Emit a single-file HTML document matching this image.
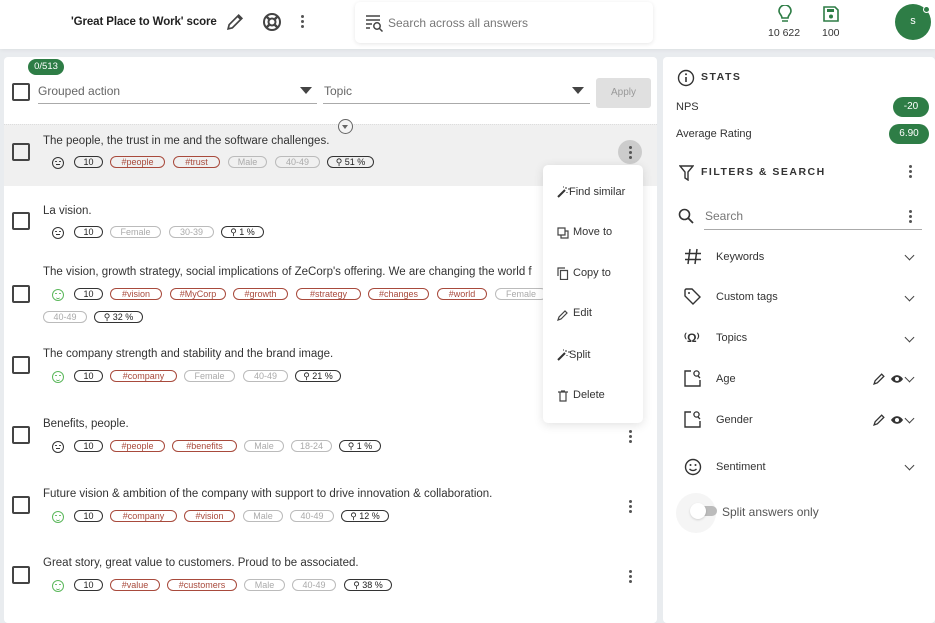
<!DOCTYPE html>
<html><head><meta charset="utf-8">
<style>
*{box-sizing:border-box;margin:0;padding:0}
body{width:935px;height:623px;overflow:hidden;background:#e9ecef;font-family:"Liberation Sans",sans-serif;color:#333;position:relative}
.abs{position:absolute}
.top{left:0;top:0;width:935px;height:49px;background:#fff;box-shadow:0 1px 4px rgba(0,0,0,.06)}
.panel{background:#fff;border-radius:4px}
.cb{position:absolute;left:12px;width:18px;height:18px;border:2px solid #444;border-radius:2px}
.txt{position:absolute;left:43px;font-size:11.5px;color:#333;white-space:nowrap}
.chip{position:absolute;height:12px;border:1.4px solid #333;border-radius:7px;font-size:9px;line-height:10px;text-align:center;color:#222;white-space:nowrap}
.r{border-color:#a84a3c;color:#a84a3c}
.g{border-color:#bbb;color:#aaa}
.smile{position:absolute;left:52px;width:12px;height:12px;border:1.5px solid #333;border-radius:50%}
.smile.gr{border-color:#5cb85c}
.smile::before{content:"";position:absolute;left:2px;top:2.5px;width:1.8px;height:1.8px;background:currentColor;border-radius:50%;box-shadow:4px 0 0 currentColor}
.smile::after{content:"";position:absolute;left:2.5px;top:5.5px;width:4px;height:1.2px;background:currentColor}
.smile.gr{color:#5cb85c}.smile{color:#333}
.smile.gr::after{height:2px;background:none;border-bottom:1.2px solid #5cb85c;border-radius:0 0 3px 3px}
.keb{position:absolute;width:3px;height:3px;background:#555;border-radius:50%;box-shadow:0 5px 0 #555,0 -5px 0 #555}
.mi{position:absolute;left:573px;font-size:11px;color:#333}
.side{position:absolute;font-size:11px;color:#333}
.chev{position:absolute;width:7px;height:7px;border-right:1.6px solid #444;border-bottom:1.6px solid #444;transform:rotate(45deg)}
.pill{position:absolute;background:#2e7d46;color:#fff;border-radius:10px;font-size:10px;text-align:center;line-height:20px}
</style></head><body>
<div class="abs top"></div>
<div class="abs" style="left:71px;top:16px;font-size:11.5px;font-weight:bold;color:#222;letter-spacing:-0.1px">'Great Place to Work' score</div>
<svg class="abs" style="left:226px;top:12px" width="19" height="19" viewBox="0 0 18 18"><path d="M2 16l1-4 9-9 3 3-9 9z M11 4l3 3" fill="none" stroke="#444" stroke-width="1.6"/></svg>
<svg class="abs" style="left:262px;top:12px" width="20" height="20" viewBox="0 0 20 20"><circle cx="10" cy="10" r="8" fill="none" stroke="#444" stroke-width="2"/><circle cx="10" cy="10" r="3.5" fill="none" stroke="#444" stroke-width="2"/><path d="M4 4l3.5 3.5M16 4l-3.5 3.5M4 16l3.5-3.5M16 16l-3.5-3.5" stroke="#444" stroke-width="2.5"/></svg>
<div class="keb" style="left:301px;top:20px"></div>
<div class="abs" style="left:355px;top:2px;width:298px;height:41px;background:#fff;border-radius:5px;box-shadow:0 1px 4px rgba(0,0,0,.1)"></div>
<svg class="abs" style="left:365px;top:14px" width="20" height="18" viewBox="0 0 20 18"><path d="M1 2h14M1 6h14M1 10h6M1 14h4" stroke="#444" stroke-width="1.5"/><circle cx="12" cy="12" r="3.2" fill="none" stroke="#444" stroke-width="1.5"/><path d="M14.5 14.5l3 3" stroke="#444" stroke-width="1.5"/></svg>
<div class="abs" style="left:388px;top:16px;font-size:12px;color:#777">Search across all answers</div>
<svg class="abs" style="left:777px;top:5px" width="16" height="20" viewBox="0 0 16 20"><path d="M5 13c0-3-3-4-3-7a6 6 0 0 1 12 0c0 3-3 4-3 7z M5 16h6" fill="none" stroke="#2e7d46" stroke-width="1.6"/></svg>
<div class="abs" style="left:768px;top:27px;font-size:10.5px">10 622</div>
<svg class="abs" style="left:823px;top:6px" width="16" height="16" viewBox="0 0 16 16"><path d="M1 1h11l3 3v11H1z" fill="none" stroke="#2e7d46" stroke-width="1.6"/><rect x="4" y="3" width="7" height="3" fill="#2e7d46"/><circle cx="8" cy="10.5" r="2" fill="#2e7d46"/></svg>
<div class="abs" style="left:822px;top:27px;font-size:10.5px">100</div>
<div class="abs" style="left:895px;top:4px;width:36px;height:36px;border-radius:50%;background:#2e7d46;color:#fff;font-size:11px;text-align:center;line-height:34px">s</div>
<div class="abs" style="left:923px;top:6px;width:7px;height:7px;border-radius:50%;background:#2e7d46;border:1.5px solid #fff"></div>

<div class="abs panel" style="left:4px;top:57px;width:653px;height:566px"></div>
<div class="abs panel" style="left:663px;top:57px;width:272px;height:566px"></div>

<div class="pill" style="left:28px;top:59px;width:36px;height:16px;line-height:16px;font-size:9.5px">0/513</div>
<div class="cb" style="top:83px"></div>
<div class="abs" style="left:38px;top:84px;font-size:12px;color:#666">Grouped action</div>
<div class="abs" style="left:38px;top:103px;width:279px;border-top:1px solid #aaa"></div>
<div class="abs" style="left:300px;top:87px;border:6px solid transparent;border-top:7px solid #444;border-bottom:0"></div>
<div class="abs" style="left:324px;top:84px;font-size:12px;color:#666">Topic</div>
<div class="abs" style="left:323px;top:103px;width:267px;border-top:1px solid #aaa"></div>
<div class="abs" style="left:572px;top:87px;border:6px solid transparent;border-top:7px solid #444;border-bottom:0"></div>
<div class="abs" style="left:596px;top:78px;width:55px;height:30px;background:#e0e0e0;border-radius:3px;color:#999;font-size:10px;text-align:center;line-height:30px">Apply</div>

<div class="abs" style="left:4px;top:124px;width:653px;height:62px;background:#f0f0f0;border-top:1px dotted #ddd"></div>
<div class="abs" style="left:338px;top:119px;width:15px;height:15px;border:1.4px solid #666;border-radius:50%;background:#f4f4f4"></div>
<div class="abs" style="left:342px;top:125px;border:3.5px solid transparent;border-top:4px solid #666;border-bottom:0"></div>
<div class="abs" style="left:618px;top:140px;width:24px;height:24px;border-radius:50%;background:#ccc"></div>
<div class="keb" style="left:629px;top:151px"></div>

<!-- row1 -->
<div class="cb" style="top:143px"></div>
<div class="txt" style="top:135px">The people, the trust in me and the software challenges.</div>
<div class="smile" style="top:157px"></div>
<div class="chip" style="left:74px;top:156px;width:29px">10</div>
<div class="chip r" style="left:110px;top:156px;width:55px">#people</div>
<div class="chip r" style="left:173px;top:156px;width:47px">#trust</div>
<div class="chip g" style="left:228px;top:156px;width:39px">Male</div>
<div class="chip g" style="left:275px;top:156px;width:45px">40-49</div>
<div class="chip" style="left:327px;top:156px;width:47px">⚲ 51 %</div>
<!-- row2 -->
<div class="cb" style="top:212px"></div>
<div class="txt" style="top:205px">La vision.</div>
<div class="smile" style="top:227px"></div>
<div class="chip" style="left:74px;top:226px;width:29px">10</div>
<div class="chip g" style="left:110px;top:226px;width:51px">Female</div>
<div class="chip g" style="left:169px;top:226px;width:45px">30-39</div>
<div class="chip" style="left:221px;top:226px;width:43px">⚲ 1 %</div>
<!-- row3 -->
<div class="cb" style="top:285px"></div>
<div class="txt" style="top:266px;width:500px;overflow:hidden">The vision, growth strategy, social implications of ZeCorp's offering. We are changing the world f</div>
<div class="smile gr" style="top:289px"></div>
<div class="chip" style="left:74px;top:288px;width:29px">10</div>
<div class="chip r" style="left:110px;top:288px;width:52px">#vision</div>
<div class="chip r" style="left:170px;top:288px;width:56px">#MyCorp</div>
<div class="chip r" style="left:233px;top:288px;width:55px">#growth</div>
<div class="chip r" style="left:296px;top:288px;width:65px">#strategy</div>
<div class="chip r" style="left:368px;top:288px;width:61px">#changes</div>
<div class="chip r" style="left:437px;top:288px;width:50px">#world</div>
<div class="chip g" style="left:495px;top:288px;width:52px">Female</div>
<div class="chip g" style="left:43px;top:311px;width:44px">40-49</div>
<div class="chip" style="left:94px;top:311px;width:49px">⚲ 32 %</div>
<!-- row4 -->
<div class="cb" style="top:356px"></div>
<div class="txt" style="top:348px">The company strength and stability and the brand image.</div>
<div class="smile gr" style="top:371px"></div>
<div class="chip" style="left:74px;top:370px;width:29px">10</div>
<div class="chip r" style="left:110px;top:370px;width:67px">#company</div>
<div class="chip g" style="left:184px;top:370px;width:51px">Female</div>
<div class="chip g" style="left:243px;top:370px;width:45px">40-49</div>
<div class="chip" style="left:295px;top:370px;width:46px">⚲ 21 %</div>
<!-- row5 -->
<div class="cb" style="top:426px"></div>
<div class="txt" style="top:418px">Benefits, people.</div>
<div class="smile" style="top:441px"></div>
<div class="chip" style="left:74px;top:440px;width:29px">10</div>
<div class="chip r" style="left:110px;top:440px;width:55px">#people</div>
<div class="chip r" style="left:172px;top:440px;width:65px">#benefits</div>
<div class="chip g" style="left:244px;top:440px;width:40px">Male</div>
<div class="chip g" style="left:291px;top:440px;width:41px">18-24</div>
<div class="chip" style="left:339px;top:440px;width:42px">⚲ 1 %</div>
<div class="keb" style="left:629px;top:435px"></div>
<!-- row6 -->
<div class="cb" style="top:496px"></div>
<div class="txt" style="top:488px">Future vision &amp; ambition of the company with support to drive innovation &amp; collaboration.</div>
<div class="smile gr" style="top:511px"></div>
<div class="chip" style="left:74px;top:510px;width:29px">10</div>
<div class="chip r" style="left:110px;top:510px;width:67px">#company</div>
<div class="chip r" style="left:184px;top:510px;width:51px">#vision</div>
<div class="chip g" style="left:243px;top:510px;width:40px">Male</div>
<div class="chip g" style="left:290px;top:510px;width:44px">40-49</div>
<div class="chip" style="left:341px;top:510px;width:48px">⚲ 12 %</div>
<div class="keb" style="left:629px;top:505px"></div>
<!-- row7 -->
<div class="cb" style="top:566px"></div>
<div class="txt" style="top:557px">Great story, great value to customers. Proud to be associated.</div>
<div class="smile gr" style="top:580px"></div>
<div class="chip" style="left:74px;top:579px;width:29px">10</div>
<div class="chip r" style="left:110px;top:579px;width:50px">#value</div>
<div class="chip r" style="left:167px;top:579px;width:70px">#customers</div>
<div class="chip g" style="left:244px;top:579px;width:41px">Male</div>
<div class="chip g" style="left:292px;top:579px;width:44px">40-49</div>
<div class="chip" style="left:344px;top:579px;width:48px">⚲ 38 %</div>
<div class="keb" style="left:629px;top:575px"></div>

<!-- menu -->
<div class="abs" style="left:543px;top:165px;width:100px;height:258px;background:#fff;border-radius:5px;box-shadow:0 2px 10px rgba(0,0,0,.12)"></div>
<svg class="abs" style="left:557px;top:186px" width="13" height="12" viewBox="0 0 13 12"><path d="M1 11l7-7" stroke="#333" stroke-width="2"/><path d="M9 1v2M11 3h2M10 6v1M6 1h1" stroke="#333" stroke-width="1"/></svg>
<div class="mi" style="top:186px;left:569px">Find similar</div>
<div class="mi" style="top:226px">Move to</div>
<svg class="abs" style="left:557px;top:227px" width="12" height="12" viewBox="0 0 12 12"><path d="M1 1h7v7H1z M4 8v3h7V4H8" fill="none" stroke="#444" stroke-width="1.2"/></svg>
<div class="mi" style="top:267px">Copy to</div>
<svg class="abs" style="left:557px;top:267px" width="12" height="13" viewBox="0 0 12 13"><path d="M1 9V1h7 M3.5 3.5h7v9h-7z" fill="none" stroke="#444" stroke-width="1.2"/></svg>
<div class="mi" style="top:307px">Edit</div>
<svg class="abs" style="left:557px;top:309px" width="12" height="12" viewBox="0 0 12 12"><path d="M1 11l1-3 6-6 2 2-6 6z" fill="none" stroke="#444" stroke-width="1.2"/></svg>
<svg class="abs" style="left:557px;top:349px" width="13" height="12" viewBox="0 0 13 12"><path d="M1 11l7-7" stroke="#333" stroke-width="2"/><path d="M9 1v2M11 3h2M10 6v1M6 1h1" stroke="#333" stroke-width="1"/></svg>
<div class="mi" style="top:349px;left:569px">Split</div>
<div class="mi" style="top:389px">Delete</div>
<svg class="abs" style="left:558px;top:390px" width="10" height="12" viewBox="0 0 10 12"><path d="M0 2h10 M3 1h4 M2 2v9h6V2" fill="none" stroke="#444" stroke-width="1.2"/></svg>

<!-- right side -->
<svg class="abs" style="left:677px;top:69px" width="18" height="18" viewBox="0 0 18 18"><circle cx="9" cy="9" r="7.5" fill="none" stroke="#333" stroke-width="1.4"/><path d="M9 8v5" stroke="#333" stroke-width="1.6"/><circle cx="9" cy="5.3" r="1" fill="#333"/></svg>
<div class="side" style="left:701px;top:71px;font-weight:bold;letter-spacing:1.5px;font-size:10.5px">STATS</div>
<div class="side" style="left:676px;top:101px">NPS</div>
<div class="pill" style="left:893px;top:97px;width:36px">-20</div>
<div class="side" style="left:676px;top:128px">Average Rating</div>
<div class="pill" style="left:889px;top:124px;width:40px">6.90</div>
<svg class="abs" style="left:679px;top:165px" width="15" height="16" viewBox="0 0 15 16"><path d="M1 1h13l-5 6v8l-3-2V7z" fill="none" stroke="#333" stroke-width="1.4"/></svg>
<div class="side" style="left:701px;top:166px;font-weight:bold;letter-spacing:1.5px;font-size:10.5px">FILTERS &amp; SEARCH</div>
<div class="keb" style="left:909px;top:170px"></div>
<svg class="abs" style="left:678px;top:208px" width="16" height="16" viewBox="0 0 16 16"><circle cx="6.5" cy="6.5" r="5" fill="none" stroke="#333" stroke-width="1.6"/><path d="M10 10l5 5" stroke="#333" stroke-width="1.8"/></svg>
<div class="side" style="left:705px;top:209px;font-size:12px;color:#777">Search</div>
<div class="abs" style="left:704px;top:229px;width:218px;border-top:1px solid #aaa"></div>
<div class="keb" style="left:909px;top:215px"></div>

<svg class="abs" style="left:684px;top:248px" width="18" height="17" viewBox="0 0 18 17"><path d="M6 1L4 16M13 1l-2 15M1 5.5h16M1 11.5h16" stroke="#333" stroke-width="1.5"/></svg>
<div class="side" style="left:716px;top:251px">Keywords</div><div class="chev" style="left:906px;top:252px"></div>
<svg class="abs" style="left:684px;top:288px" width="18" height="18" viewBox="0 0 18 18"><path d="M1 2v6l8 8 7-7-8-8H2z" fill="none" stroke="#333" stroke-width="1.4"/><circle cx="5" cy="5" r="1" fill="#333"/></svg>
<div class="side" style="left:716px;top:291px">Custom tags</div><div class="chev" style="left:906px;top:293px"></div>
<div class="abs" style="left:684px;top:331px;font-size:12px;font-weight:bold;color:#333">⁽Ω⁾</div>
<div class="side" style="left:716px;top:332px">Topics</div><div class="chev" style="left:906px;top:334px"></div>
<svg class="abs" style="left:684px;top:369px" width="18" height="18" viewBox="0 0 18 18"><path d="M7 2H1v15h15v-6" fill="none" stroke="#333" stroke-width="1.4"/><circle cx="12.5" cy="4.5" r="2.6" fill="none" stroke="#333" stroke-width="1.3"/><path d="M14 7l2 2" stroke="#333" stroke-width="1.3"/></svg>
<div class="side" style="left:716px;top:373px">Age</div>
<svg class="abs" style="left:873px;top:372px" width="13" height="13" viewBox="0 0 12 12"><path d="M1 11l1-3 6-6 2 2-6 6z" fill="none" stroke="#333" stroke-width="1.2"/></svg>
<svg class="abs" style="left:890px;top:374px" width="14" height="10" viewBox="0 0 14 10"><path d="M1 5c3-5 9-5 12 0c-3 5-9 5-12 0z" fill="#333"/><circle cx="7" cy="5" r="2" fill="#fff"/></svg>
<div class="chev" style="left:906px;top:374px"></div>
<svg class="abs" style="left:684px;top:410px" width="18" height="18" viewBox="0 0 18 18"><path d="M7 2H1v15h15v-6" fill="none" stroke="#333" stroke-width="1.4"/><circle cx="12.5" cy="4.5" r="2.6" fill="none" stroke="#333" stroke-width="1.3"/><path d="M14 7l2 2" stroke="#333" stroke-width="1.3"/></svg>
<div class="side" style="left:716px;top:414px">Gender</div>
<svg class="abs" style="left:873px;top:413px" width="13" height="13" viewBox="0 0 12 12"><path d="M1 11l1-3 6-6 2 2-6 6z" fill="none" stroke="#333" stroke-width="1.2"/></svg>
<svg class="abs" style="left:890px;top:415px" width="14" height="10" viewBox="0 0 14 10"><path d="M1 5c3-5 9-5 12 0c-3 5-9 5-12 0z" fill="#333"/><circle cx="7" cy="5" r="2" fill="#fff"/></svg>
<div class="chev" style="left:906px;top:415px"></div>
<svg class="abs" style="left:684px;top:458px" width="18" height="18" viewBox="0 0 18 18"><circle cx="9" cy="9" r="7.5" fill="none" stroke="#333" stroke-width="1.4"/><circle cx="6.5" cy="7" r="1" fill="#333"/><circle cx="11.5" cy="7" r="1" fill="#333"/><path d="M5.5 11c2 2 5 2 7 0" fill="none" stroke="#333" stroke-width="1.3"/></svg>
<div class="side" style="left:716px;top:461px">Sentiment</div><div class="chev" style="left:906px;top:462px"></div>
<div class="abs" style="left:676px;top:493px;width:40px;height:40px;border-radius:50%;background:#f5f5f5"></div>
<div class="abs" style="left:700px;top:506px;width:17px;height:10px;border-radius:5px;background:#bbb"></div>
<div class="abs" style="left:690px;top:503px;width:16px;height:16px;border-radius:50%;background:#fff;box-shadow:0 1px 2px rgba(0,0,0,.15)"></div>
<div class="side" style="left:722px;top:505px;font-size:12px;color:#555">Split answers only</div>
</body></html>
